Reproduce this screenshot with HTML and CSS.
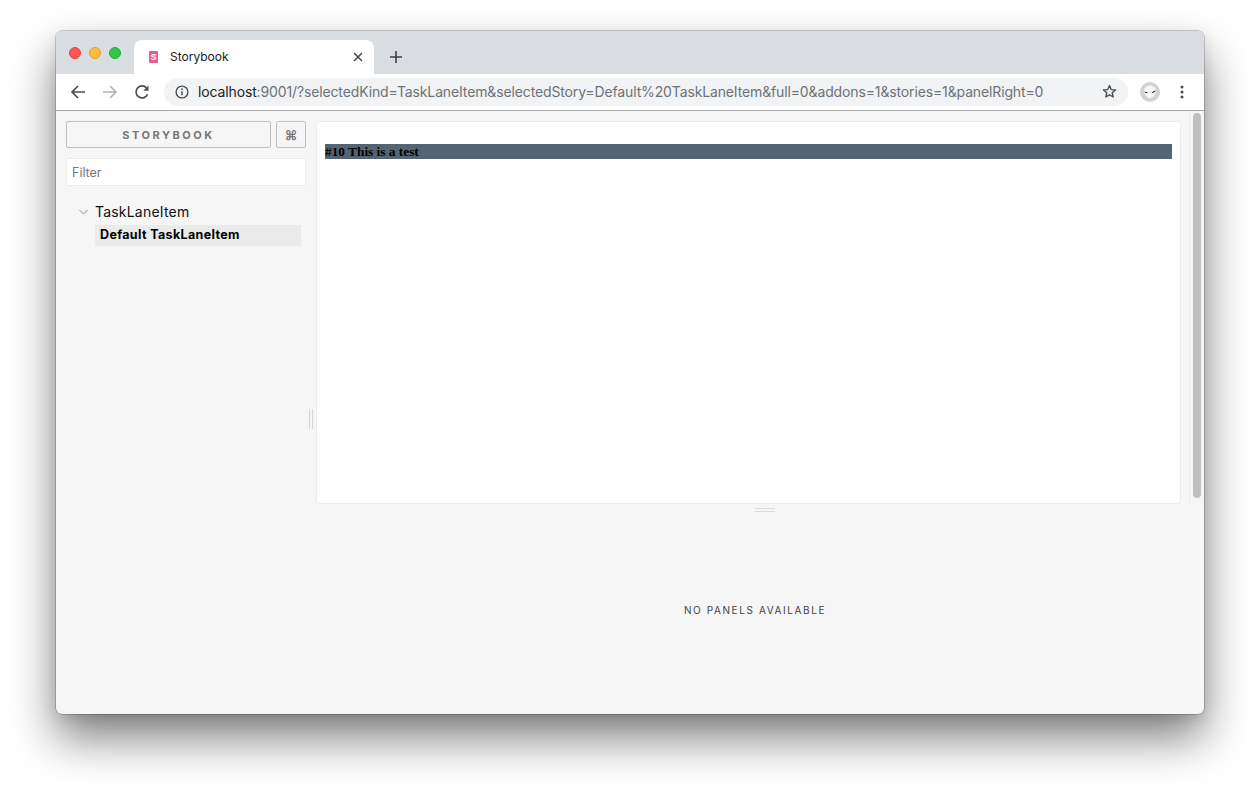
FILE: index.html
```html
<!DOCTYPE html>
<html lang="en">
<head>
<meta charset="utf-8">
<title>Storybook</title>
<link rel="stylesheet" href="styles.css">
</head>
<body>
<div class="window">
  <header class="tabstrip">
    <div class="traffic">
      <span class="light red"></span><span class="light yellow"></span><span class="light green"></span>
    </div>
    <div class="tab">
      <span class="favicon">S</span>
      <span class="tab-title">Storybook</span>
      <svg class="tab-close" width="10" height="10" viewBox="0 0 10 10"><path d="M1 1l8 8M9 1l-8 8" stroke="#45484c" stroke-width="1.5" fill="none"/></svg>
    </div>
    <svg class="new-tab" width="12" height="12" viewBox="0 0 12 12"><path d="M6 0v12M0 6h12" stroke="#3c4043" stroke-width="1.6" fill="none"/></svg>
  </header>
  <nav class="toolbar">
    <svg class="nav-icon" width="16" height="16" viewBox="0 0 16 16"><path d="M15 8H2M8 2L2 8l6 6" stroke="#4a4d51" stroke-width="1.7" fill="none"/></svg>
    <svg class="nav-icon" width="16" height="16" viewBox="0 0 16 16"><path d="M1 8h13M8 2l6 6-6 6" stroke="#b1b3b6" stroke-width="1.7" fill="none"/></svg>
    <svg class="nav-icon" width="16" height="16" viewBox="0 0 16 16"><path d="M13.6 10.2A6 6 0 1 1 12.4 3.8" stroke="#4a4d51" stroke-width="1.7" fill="none"/><path d="M14.5 1.5v5.2H9.3z" fill="#4a4d51"/></svg>
    <div class="omnibox">
      <svg class="info" width="14" height="14" viewBox="0 0 14 14"><circle cx="7" cy="7" r="5.9" stroke="#4a4d51" stroke-width="1.4" fill="none"/><path d="M7 6.2v4" stroke="#4a4d51" stroke-width="1.5"/><circle cx="7" cy="4.2" r=".9" fill="#4a4d51"/></svg>
      <span class="url"><span class="host">localhost</span>:9001/?selectedKind=TaskLaneItem&amp;selectedStory=Default%20TaskLaneItem&amp;full=0&amp;addons=1&amp;stories=1&amp;panelRight=0</span>
      <svg class="star" width="15" height="15" viewBox="0 0 15 15"><path d="M7.5 1.6l1.7 4 4.3.4-3.3 2.8 1 4.2-3.7-2.2-3.7 2.2 1-4.2L1.5 6l4.3-.4z" stroke="#4a4d51" stroke-width="1.4" fill="none" stroke-linejoin="round"/></svg>
    </div>
    <svg class="avatar" width="20" height="20" viewBox="0 0 20 20"><circle cx="10" cy="10" r="10" fill="#d2d2d2"/><path d="M10 3.5c3.600 0 6 2.300 6 5.200 0 3.500-3.600 7.800-6 7.800s-6-4.300-6-7.800c0-2.900 2.400-5.200 6-5.200z" fill="#f6f6f6"/><path d="M4.300 9.600l3.300.7c-.3 1.300-2.300 1.400-3.300-.7zM15.700 8.200l-4 2c.5 1.200 3.100.7 4-2z" fill="#2e2e2e"/></svg>
    <svg class="menu" width="4" height="14" viewBox="0 0 4 14"><circle cx="2" cy="2" r="1.500" fill="#4a4d51"/><circle cx="2" cy="7" r="1.500" fill="#4a4d51"/><circle cx="2" cy="12" r="1.500" fill="#4a4d51"/></svg>
  </nav>
  <main class="app">
    <aside class="sidebar">
      <div class="brand-row">
        <button class="brand">STORYBOOK</button>
        <button class="shortcut">⌘</button>
      </div>
      <div class="filter">Filter</div>
      <ul class="tree">
        <li class="tree-kind">
          <svg class="chevron" width="9" height="6" viewBox="0 0 9 6"><path d="M.5 1l4 4 4-4" stroke="#8a8a8a" stroke-width="1" fill="none"/></svg>
          <span>TaskLaneItem</span>
        </li>
        <li class="tree-story">Default TaskLaneItem</li>
      </ul>
    </aside>
    <div class="v-handle"><i></i></div>
    <div class="workspace">
      <div class="preview-row">
        <section class="preview">
          <div class="task-item">#10 This is a test</div>
        </section>
        <div class="scroll-lane"><div class="scroll-thumb"></div></div>
      </div>
      <div class="h-handle"><i></i></div>
      <div class="panel">NO PANELS AVAILABLE</div>
    </div>
  </main>
</div>
</body>
</html>
```
FILE: styles.css
```css
* { box-sizing: border-box; }
html, body { margin: 0; height: 100%; overflow: hidden; background: #fff; }
body { padding: 31px 56px 80px; font-family: Inter, "Liberation Sans", sans-serif; }

.window {
  width: 1148px;
  height: 683px;
  display: flex;
  flex-direction: column;
  border-radius: 6px;
  overflow: hidden;
  background: #f6f6f6;
  box-shadow: 0 0 0 .5px rgba(0,0,0,.35), 0 24px 46px rgba(0,0,0,.5), 0 4px 14px rgba(0,0,0,.1);
}

.tabstrip {
  height: 43px;
  flex: none;
  display: flex;
  align-items: flex-end;
  background: #d9dce0;
}
.traffic { display: flex; gap: 8px; padding: 0 13px; align-self: flex-start; margin-top: 16px; }
.light { width: 12px; height: 12px; border-radius: 50%; }
.red { background: #fc5753; border: 1px solid #e0443e; }
.yellow { background: #fdbc40; border: 1px solid #dea123; }
.green { background: #33c748; border: 1px solid #1dad2b; }

.tab {
  width: 240px;
  height: 34px;
  padding: 0 11px 1px 15px;
  display: flex;
  align-items: center;
  background: #fff;
  border-radius: 8px 8px 0 0;
}
.favicon {
  width: 9px;
  height: 12px;
  flex: none;
  background: #e85d86;
  border-radius: 1px;
  color: #fff;
  font: 800 9px/12px "Liberation Sans", sans-serif;
  text-align: center;
}
.tab-title { margin-left: 12px; font-size: 12px; color: #202124; flex: 1; }
.tab-close { flex: none; }
.new-tab { margin: 0 0 11px 16px; }

.toolbar {
  height: 37px;
  flex: none;
  display: flex;
  align-items: center;
  padding: 0 0 1px 14px;
  background: #fff;
  border-bottom: 1px solid #a9a9a9;
}
.nav-icon { flex: none; margin-right: 16px; }
.omnibox {
  width: 964px;
  height: 28px;
  margin-left: -2px;
  padding: 0 11px;
  flex: none;
  display: flex;
  align-items: center;
  background: #f1f3f4;
  border-radius: 14px;
}
.info { flex: none; }
.url { margin-left: 9px; flex: 1; font-size: 14px; letter-spacing: -.135px; color: #6e7276; white-space: nowrap; }
.host { color: #202124; }
.avatar { flex: none; margin-left: 12px; }
.menu { flex: none; margin-left: 20px; }

.app { flex: 1; min-height: 0; display: flex; }

.sidebar { width: 250px; flex: none; padding: 10px 0 0 10px; }
.brand-row { display: flex; gap: 5px; }
.brand, .shortcut {
  height: 27px;
  padding: 0;
  background: #f6f6f6;
  border: 1px solid #c1c1c1;
  border-radius: 2px;
  color: #777;
  font-family: Inter, "Liberation Sans", sans-serif;
  font-weight: 700;
}
.brand { width: 205px; font-size: 11px; letter-spacing: 2.5px; }
.shortcut { width: 30px; font-size: 13px; }
.filter {
  height: 28px;
  margin-top: 10px;
  padding-left: 5px;
  background: #fff;
  border: 1px solid #ececec;
  border-radius: 2px;
  color: #777;
  font-size: 12.5px;
  line-height: 27px;
}
.tree { list-style: none; margin: 15px 0 0; padding: 0; }
.tree-kind {
  height: 21px;
  display: flex;
  align-items: center;
  padding-left: 13px;
  font-size: 14px;
  letter-spacing: .2px;
  color: #111;
}
.chevron { margin-right: 7px; }
.tree-story {
  width: 206px;
  height: 21px;
  margin: 3px 0 0 29px;
  padding-left: 5px;
  background: #ebebeb;
  color: #000;
  font-size: 12.5px;
  letter-spacing: .35px;
  font-weight: 700;
  line-height: 19px;
}

.v-handle { width: 10px; flex: none; display: flex; align-items: center; justify-content: center; }
.v-handle i { display: block; width: 4px; height: 20px; margin: 12px 0 0 -1px; border: solid #d5d5d5; border-width: 0 1px; }

.workspace { flex: 1; min-width: 0; display: flex; flex-direction: column; }
.preview-row { height: 393px; flex: none; display: flex; }
.preview {
  width: 865px;
  height: 383px;
  margin-top: 10px;
  flex: none;
  padding: 22px 8px 0;
  background: #fff;
  border: 1px solid #ececec;
  border-radius: 4px;
}
.task-item {
  height: 15px;
  background: #556472;
  color: #000;
  font: 700 13.33px/15px "Liberation Serif", serif;
}
.scroll-lane {
  width: 16px;
  margin-left: 8px;
  padding: 2px 3px 0 3px;
  border-left: 1px solid #ececec;
}
.scroll-thumb { width: 8px; height: 385px; background: #c0c0c0; border-radius: 4px; }

.h-handle { height: 12px; flex: none; display: flex; justify-content: center; padding-left: 10px; align-items: flex-start; }
.h-handle i { display: block; width: 20px; height: 4px; margin: 4px 0 0; border: solid #dcdcdc; border-width: 1px 0; }

.panel {
  flex: 1;
  display: flex;
  align-items: center;
  justify-content: center;
  padding: 0 10px 10px 0;
  color: #444;
  font-size: 10px;
  letter-spacing: 1.6px;
}
```
